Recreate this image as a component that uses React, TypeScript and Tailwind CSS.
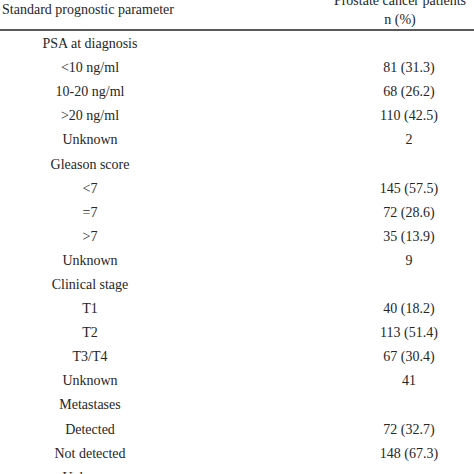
const rows: { label: string; value: string; head?: boolean }[] = [
  { label: "PSA at diagnosis", value: "", head: true },
  { label: "<10 ng/ml", value: "81 (31.3)" },
  { label: "10-20 ng/ml", value: "68 (26.2)" },
  { label: ">20 ng/ml", value: "110 (42.5)" },
  { label: "Unknown", value: "2" },
  { label: "Gleason score", value: "", head: true },
  { label: "<7", value: "145 (57.5)" },
  { label: "=7", value: "72 (28.6)" },
  { label: ">7", value: "35 (13.9)" },
  { label: "Unknown", value: "9" },
  { label: "Clinical stage", value: "", head: true },
  { label: "T1", value: "40 (18.2)" },
  { label: "T2", value: "113 (51.4)" },
  { label: "T3/T4", value: "67 (30.4)" },
  { label: "Unknown", value: "41" },
  { label: "Metastases", value: "", head: true },
  { label: "Detected", value: "72 (32.7)" },
  { label: "Not detected", value: "148 (67.3)" },
  { label: "Unknown", value: "" },
];

export default function App() {
  return (
    <div
      className="w-[474px] h-[474px] overflow-hidden bg-white text-[#262626] text-[14px]"
      style={{ fontFamily: '"Liberation Serif", "Times New Roman", serif' }}
    >
      <div className="flex h-[39px] mt-[-10px] leading-[19px]">
        <div className="w-[176px] flex items-center justify-center">
          Standard prognostic parameter
        </div>
        <div className="flex-1" />
        <div className="w-[180px] flex flex-col items-center justify-center mr-[-16px] shrink-0">
          <span className="whitespace-nowrap">Prostate cancer patients</span>
          <span>n (%)</span>
        </div>
      </div>
      <div className="h-[2px] bg-[#5a5a5a]" />
      <div className="flex flex-col mt-[1px]">
        {rows.map((r, i) => (
          <div key={i} className="flex h-[24.1px] items-center leading-none">
            <div className="w-[180px] text-center">{r.label}</div>
            <div className="flex-1" />
            <div className="w-[128px] text-center mr-[1px]">{r.value}</div>
          </div>
        ))}
      </div>
    </div>
  );
}
